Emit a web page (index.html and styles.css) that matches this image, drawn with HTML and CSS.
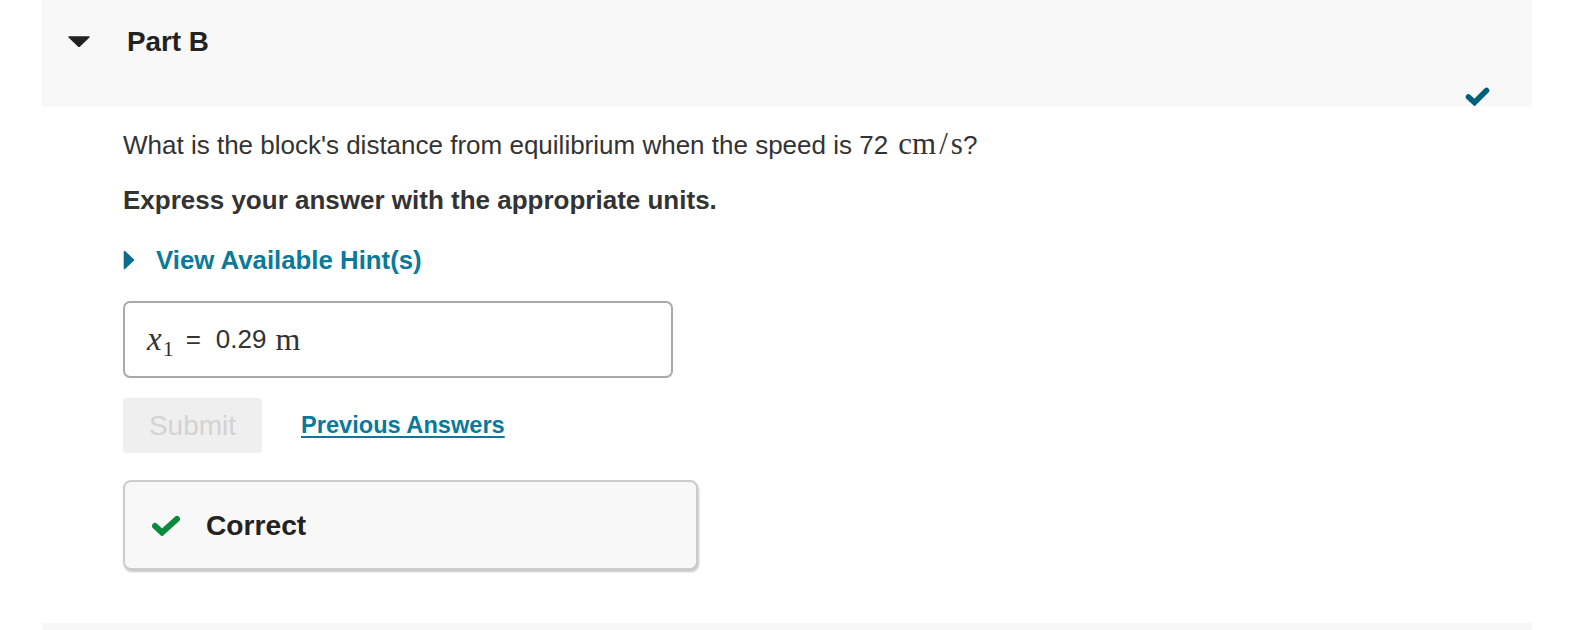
FILE: index.html
```html
<!DOCTYPE html>
<html>
<head>
<meta charset="utf-8">
<link rel="stylesheet" href="styles.css">
</head>
<body>
<div class="page">
  <section class="part">
    <header class="part-head">
      <div class="title-row">
        <svg class="caret" width="22" height="11" viewBox="0 0 22 11"><path d="M1 1 L21 1 L11 10.5 Z" fill="#222" stroke="#222" stroke-width="1.5" stroke-linejoin="round"/></svg>
        <h2 class="part-title">Part B</h2>
      </div>
      <div class="status-row">
        <svg class="status-check" width="25" height="19" viewBox="0 0 25 19"><path d="M3.5 10 L9.5 15.5 L21.5 3.5" fill="none" stroke="#005f79" stroke-width="5.6" stroke-linecap="round" stroke-linejoin="miter"/></svg>
      </div>
    </header>
    <div class="part-body">
      <p class="question">What is the block's distance from equilibrium when the speed is 72 <span class="math">cm<span class="slash">/</span>s</span>?</p>
      <p class="instr">Express your answer with the appropriate units.</p>
      <div class="hint">
        <svg class="hint-caret" width="12" height="20" viewBox="0 0 12 20"><path d="M1.5 1.5 L10.5 10 L1.5 18.5 Z" fill="#0b6f8c" stroke="#0b6f8c" stroke-width="1.6" stroke-linejoin="round"/></svg>
        <a class="hint-link" href="#">View Available Hint(s)</a>
      </div>
      <div class="answer-box">
        <span class="var">x<sub>1</sub></span><span class="eq">=</span><span class="num">0.29</span><span class="unit">m</span>
      </div>
      <div class="actions">
        <button class="submit" disabled>Submit</button>
        <a class="prev" href="#">Previous Answers</a>
      </div>
      <div class="feedback">
        <svg class="ok-check" width="30" height="21" viewBox="0 0 30 21"><path d="M4 11 L11 17.5 L26 4" fill="none" stroke="#0a8a3c" stroke-width="6" stroke-linecap="round"/></svg>
        <span class="feedback-text">Correct</span>
      </div>
    </div>
  </section>
  <div class="next-part"></div>
</div>
</body>
</html>
```

FILE: styles.css
```css
html, body {
  margin: 0;
  padding: 0;
  background: #ffffff;
}

body {
  font-family: "Liberation Sans", Arial, Helvetica, sans-serif;
  color: #333333;
}

.page {
  padding-left: 42px;
  width: 1490px;
  height: 630px;
  display: flex;
  flex-direction: column;
}

.part-head {
  background: #f8f8f8;
  height: 107px;
  display: flex;
  flex-direction: column;
}

.title-row {
  height: 84px;
  display: flex;
  align-items: center;
  padding-left: 26px;
}

.caret {
  display: block;
  margin-top: -1px;
}

.part-title {
  margin: 0 0 0 37px;
  font-size: 27.8px;
  font-weight: bold;
  color: #222222;
  line-height: 30px;
}

.status-row {
  display: flex;
  justify-content: flex-end;
  padding-right: 42px;
  padding-top: 3px;
}

.status-check {
  display: block;
}

.part-body {
  padding-left: 81px;
  padding-top: 22px;
}

.question {
  margin: 0;
  font-size: 26px;
  line-height: 30px;
  color: #333333;
}

.math {
  font-family: "Liberation Serif", "Times New Roman", serif;
  font-size: 31px;
  margin-left: 3px;
}

.slash {
  margin: 0 3px;
}

.instr {
  margin: 25px 0 0 0;
  font-size: 26px;
  font-weight: bold;
  line-height: 30px;
  color: #333333;
}

.hint {
  margin-top: 30px;
  height: 30px;
  display: flex;
  align-items: center;
}

.hint-caret {
  display: block;
}

.hint-link {
  margin-left: 21px;
  font-size: 25.8px;
  font-weight: bold;
  color: #0a7a9a;
  text-decoration: none;
  line-height: 30px;
}

.answer-box {
  margin-top: 26px;
  box-sizing: border-box;
  width: 550px;
  height: 77px;
  border: 2px solid #aaaaaa;
  border-radius: 7px;
  display: flex;
  align-items: center;
  padding-left: 22px;
  color: #333333;
}

.var {
  font-family: "Liberation Serif", "Times New Roman", serif;
  font-style: italic;
  font-size: 33px;
}

.var sub {
  font-style: normal;
  font-size: 22px;
  vertical-align: -6px;
  line-height: 0;
  margin-left: 1px;
}

.eq {
  font-size: 26px;
  margin-left: 12px;
}

.num {
  font-size: 26px;
  margin-left: 15px;
}

.unit {
  font-family: "Liberation Serif", "Times New Roman", serif;
  font-size: 32px;
  margin-left: 9px;
}

.actions {
  margin-top: 20px;
  display: flex;
  align-items: center;
}

.submit {
  width: 139px;
  height: 55px;
  border: none;
  border-radius: 4px;
  background: #efefef;
  color: #d3d3d3;
  font-family: "Liberation Sans", Arial, Helvetica, sans-serif;
  font-size: 28px;
  padding: 0;
}

.prev {
  margin-left: 39px;
  font-size: 23.6px;
  font-weight: bold;
  color: #0a7a9a;
  text-decoration: underline;
  text-decoration-thickness: 2px;
  text-underline-offset: 3px;
}

.feedback {
  margin-top: 27px;
  box-sizing: border-box;
  width: 575px;
  height: 90px;
  background: #f8f8f8;
  border: 2px solid #cccccc;
  border-radius: 8px;
  box-shadow: 1px 2px 2px rgba(0, 0, 0, 0.22);
  display: flex;
  align-items: center;
  padding-left: 26px;
}

.ok-check {
  display: block;
}

.feedback-text {
  margin-left: 25px;
  font-size: 28.2px;
  font-weight: bold;
  color: #222222;
}

.next-part {
  margin-top: auto;
  height: 7px;
  background: #f7f7f7;
}
```
